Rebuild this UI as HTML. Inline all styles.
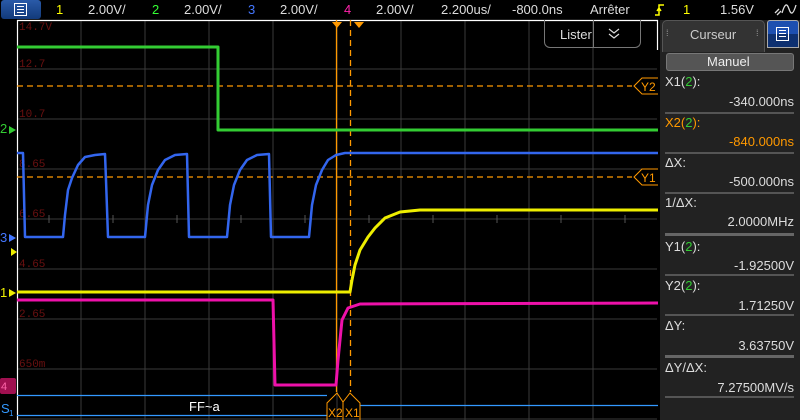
<!DOCTYPE html>
<html><head><meta charset="utf-8"><style>
*{margin:0;padding:0;box-sizing:border-box}
body{width:800px;height:420px;background:#000;overflow:hidden;position:relative;font-family:"Liberation Sans",sans-serif;color:#ddd}
.t{position:absolute;font-size:13px;line-height:14px;white-space:nowrap}
.rp{position:absolute;left:660px;top:20px;width:140px;height:400px;background:#222}
.lb{position:absolute;left:665px;font-size:13px;color:#ddd}
.vl{position:absolute;right:6px;font-size:13px;color:#ddd;text-align:right}
.sep{position:absolute;left:665px;width:129px;height:2px;background:#555}
</style></head><body>
<!-- top bar -->
<div style="position:absolute;left:1px;top:0;width:40px;height:19px;background:linear-gradient(#2a5aa8,#123a7a);border-radius:3px"></div>
<div style="position:absolute;left:14px;top:3px;width:13px;height:13px;border:1.5px solid #fff"></div>
<div style="position:absolute;left:17px;top:6px;width:7px;height:1px;background:#fff;box-shadow:0 3px #fff,0 6px #fff"></div>
<div class="t" style="left:56px;top:3px;color:#ff0">1</div>
<div class="t" style="left:88px;top:3px">2.00V/</div>
<div class="t" style="left:152px;top:3px;color:#3f3">2</div>
<div class="t" style="left:184px;top:3px">2.00V/</div>
<div class="t" style="left:248px;top:3px;color:#47f">3</div>
<div class="t" style="left:280px;top:3px">2.00V/</div>
<div class="t" style="left:344px;top:3px;color:#f2a">4</div>
<div class="t" style="left:376px;top:3px">2.00V/</div>
<div class="t" style="left:441px;top:3px">2.200us/</div>
<div class="t" style="left:512px;top:3px">-800.0ns</div>
<div class="t" style="left:590px;top:3px">Arrêter</div>
<svg style="position:absolute;left:654px;top:3px" width="12" height="14"><path d="M1 12H5V2H10M3 8L5 5L7 8" stroke="#ff0" fill="none" stroke-width="1.5"/></svg>
<div class="t" style="left:683px;top:3px;color:#ff0">1</div>
<div class="t" style="left:720px;top:3px">1.56V</div>
<svg style="position:absolute;left:774px;top:3px" width="24" height="14"><path d="M1 10L5 6M3 12L7 8M8 10C11 0 13 0 15 6C17 12 19 12 22 2" stroke="#ddd" fill="none" stroke-width="1.3"/></svg>

<!-- scope -->
<svg style="position:absolute;left:0;top:0" width="660" height="420">
<g stroke="#3a3a3a" stroke-width="1">
<path d="M81 20V420M145 20V420M209 20V420M273 20V420M337 20V420M401 20V420M465 20V420M529 20V420M593 20V420M17 69H657M17 119H657M17 169H657M17 219H657M17 269H657M17 319H657M17 369H657M17 419H657"/>
</g>
<g stroke="#555"><path d="M49 215V223M113 215V223M177 215V223M241 215V223M305 215V223M369 215V223M433 215V223M497 215V223M561 215V223M625 215V223"/></g>
<path d="M17.5 20V420M17 20.5H658M657.5 20V50" stroke="#fff" stroke-width="1.2"/>
<g font-family="Liberation Mono,monospace" font-size="11" fill="#6a1010">
<text x="19" y="30">14.7V</text><text x="19" y="67">12.7</text><text x="19" y="117">10.7</text><text x="19" y="167">8.65</text><text x="19" y="217">6.65</text><text x="19" y="267">4.65</text><text x="19" y="317">2.65</text><text x="19" y="367">650m</text>
</g>
<!-- cursors -->
<path d="M17 86H632M17 177H632" stroke="#f90" stroke-width="1.3" stroke-dasharray="6,4"/>
<path d="M336.5 20V392" stroke="#f90" stroke-width="1.3"/>
<path d="M350.5 20V392" stroke="#f90" stroke-width="1.3" stroke-dasharray="6,4"/>
<path d="M332 22L337 28L342 22M354 22L359 28L364 22" fill="#f90"/>
<!-- bus -->
<path d="M17 395.5H327M17 415.5H327M360 405.5H658" stroke="#39f" stroke-width="1.3"/>
<text x="189" y="411" font-size="13" fill="#fff" font-family="Liberation Sans">FF~a</text>
<path d="M327 420V403L337 393L343 402L350 393L360 403V420M343 402V420" stroke="#f90" fill="none" stroke-width="1"/>
<text x="328" y="417" font-size="12" fill="#f90">X2</text><text x="345" y="417" font-size="12" fill="#f90">X1</text>
<path d="M658 78H642L634 86L642 94H658M658 169H642L634 177L642 185H658" stroke="#f90" fill="#000" stroke-width="1"/>
<text x="641" y="91" font-size="12" fill="#f90">Y2</text><text x="641" y="182" font-size="12" fill="#f90">Y1</text>
<!-- traces -->
<g fill="none" stroke-width="3" stroke-linejoin="round">
<path stroke="#3c3" d="M17 47H218V130H658"/>
<path stroke="#36e" stroke-width="2.5" d="M17 153H23L25 237H63L65 215L68 190L72 178L78 165L85 157L95 155L105 154L106 180L108 237H145L148 205L152 185L158 170L165 160L175 155L187 154L189 237H227L230 205L234 185L240 170L247 160L257 155L269 154L271 237H309L312 205L316 185L322 170L328 160L336 155L345 153H658"/>
<path stroke="#ee0" d="M17 292H350L352 280L355 265L360 250L368 237L375 228L385 218L400 212L420 210H658"/>
<path stroke="#e1a" d="M17 300H273L275 385H336L338 360L342 320L348 308L360 304L658 303"/>
</g>
<!-- left markers -->
<text x="0" y="133" font-size="13" fill="#3c3">2</text><path d="M9 126L16 130L9 134Z" fill="#3c3"/>
<text x="0" y="242" font-size="13" fill="#47f">3</text><path d="M9 234L16 238L9 242Z" fill="#47f"/>
<path d="M11 248L17 252L11 256Z" fill="#ee0"/>
<text x="0" y="297" font-size="13" fill="#ee0">1</text><path d="M9 289L16 293L9 297Z" fill="#ee0"/>
<rect x="0" y="378" width="16" height="16" rx="2" fill="#a01050"/><text x="1" y="390" font-size="11" fill="#f6a">4</text>
<text x="1" y="413" font-size="13" fill="#39f">S</text><text x="9" y="416" font-size="8" fill="#39f">1</text>
</svg>

<!-- Lister -->
<div style="position:absolute;left:544px;top:20px;width:97px;height:28px;border:1px solid #777;border-top:none;border-radius:0 0 6px 6px"></div>
<div style="position:absolute;left:593px;top:20px;width:1px;height:28px;background:#777"></div>
<div class="t" style="left:560px;top:28px">Lister</div>
<svg style="position:absolute;left:606px;top:27px" width="16" height="14"><path d="M3 2L8 6L13 2M3 7L8 11L13 7" stroke="#ddd" fill="none" stroke-width="1.2"/></svg>

<!-- right panel -->
<div class="rp"></div>
<div style="position:absolute;left:662px;top:20px;width:103px;height:32px;background:#333;border:1px solid #555;border-bottom:none;border-radius:5px 5px 0 0"></div>
<div class="t" style="left:690px;top:28px;color:#ccc">Curseur</div>
<div class="t" style="left:666px;top:26px;color:#999;font-size:9px">⁞</div>
<div class="t" style="left:756px;top:26px;color:#999;font-size:9px">⁞</div>
<div style="position:absolute;left:767px;top:20px;width:32px;height:28px;background:linear-gradient(#1d4fb0 50%,#0e3070 50%);border:1px solid #aaa;border-radius:3px 3px 0 0"></div>
<div style="position:absolute;left:776px;top:27px;width:13px;height:14px;border:1.5px solid #fff"></div>
<div style="position:absolute;left:779px;top:30px;width:7px;height:1px;background:#fff;box-shadow:0 3px #fff,0 6px #fff"></div>
<div style="position:absolute;left:666px;top:53px;width:128px;height:18px;background:#555;border:1px solid #777;border-radius:3px"></div>
<div class="t" style="left:707px;top:55px;color:#eee">Manuel</div>

<div class="lb" style="top:74px">X1(<span style="color:#3c3">2</span>):</div>
<div class="t vl" style="top:95px">-340.000ns</div>
<div class="sep" style="top:112px"></div>
<div class="lb" style="top:115px;color:#f90">X2(<span style="color:#3c3">2</span>):</div>
<div class="t vl" style="top:135px;color:#f90">-840.000ns</div>
<div class="sep" style="top:152px"></div>
<div class="lb" style="top:155px">ΔX:</div>
<div class="t vl" style="top:175px">-500.000ns</div>
<div class="sep" style="top:192px"></div>
<div class="lb" style="top:195px">1/ΔX:</div>
<div class="t vl" style="top:215px">2.0000MHz</div>
<div class="sep" style="top:233px;height:3px;background:#666"></div>
<div class="lb" style="top:239px">Y1(<span style="color:#3c3">2</span>):</div>
<div class="t vl" style="top:259px">-1.92500V</div>
<div class="sep" style="top:274px"></div>
<div class="lb" style="top:278px">Y2(<span style="color:#3c3">2</span>):</div>
<div class="t vl" style="top:299px">1.71250V</div>
<div class="sep" style="top:314px"></div>
<div class="lb" style="top:318px">ΔY:</div>
<div class="t vl" style="top:339px">3.63750V</div>
<div class="sep" style="top:355px;height:3px;background:#666"></div>
<div class="lb" style="top:360px">ΔY/ΔX:</div>
<div class="t vl" style="top:381px">7.27500MV/s</div>
<div class="sep" style="top:396px"></div>
</body></html>
